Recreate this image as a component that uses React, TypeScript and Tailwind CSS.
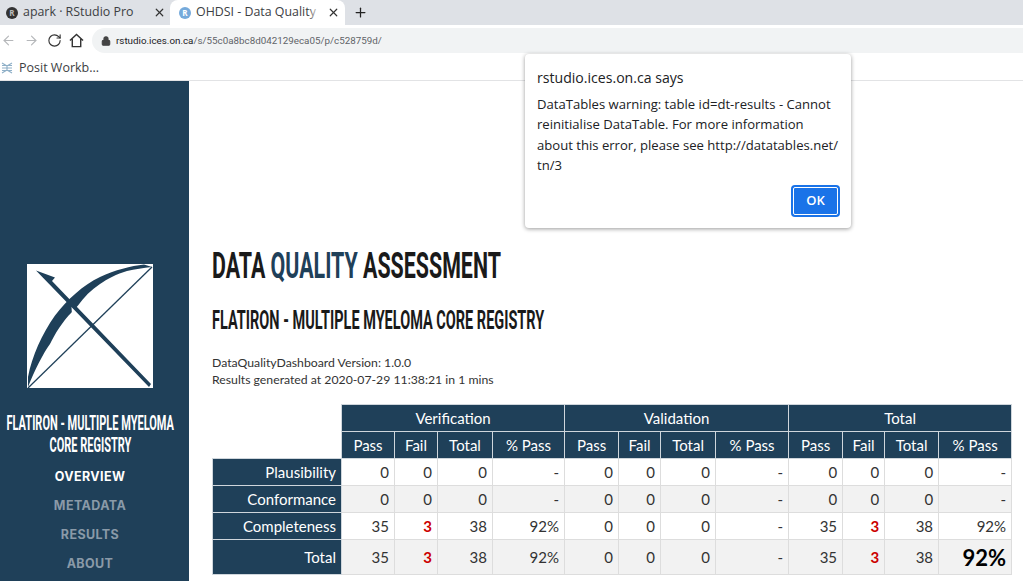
import { ArrowLeft, ArrowRight, RotateCw, Lock, X, Plus } from "lucide-react";

const cols = [53, 43, 55, 72, 54, 42, 55, 73, 54, 42, 54, 73];

const rows = [
  { name: "Plausibility", vals: ["0", "0", "0", "-"], total: ["0", "0", "0", "-"], h: "h-[27px]" },
  { name: "Conformance", vals: ["0", "0", "0", "-"], total: ["0", "0", "0", "-"], h: "h-[27px]" },
  { name: "Completeness", vals: ["35", "3", "38", "92%"], total: ["35", "3", "38", "92%"], h: "h-[27px]" },
  { name: "Total", vals: ["35", "3", "38", "92%"], total: ["35", "3", "38", "92%"], h: "h-[35px]", last: true },
];

function Favicon({ dark }: { dark?: boolean }) {
  return (
    <span
      className={`flex h-3 w-3 shrink-0 items-center justify-center rounded-full text-[8px] font-bold ${
        dark ? "bg-[#333333] text-[#bbbbbb]" : "bg-[#75aadb] text-white"
      }`}
    >
      R
    </span>
  );
}

function Logo() {
  return (
    <svg viewBox="0 0 126 124" className="h-[124px] w-[126px]">
      <rect width="126" height="124" fill="#ffffff" />
      <path
        d="M1 123 L1 113 C5 92 15 70 28 51.5 C40 36 56 21 73 13 C88 6 104 2 117 0.5 L125 3 C116 4 108 5 100 7 C90 10 80 15 73 20 C64 26 57 33 51 41.5 L45 48 C35 58 28 70 23 80 C17 88 7 107 1 123 Z"
        fill="#1f4059"
      />
      <path d="M44.5 43 L45 51 L53 51 L53 44 Z" fill="#ffffff" />
      <path d="M9 6.5 L28 13.5 L25 17 L124 120 L122 123 Z" fill="#1f4059" />
      <line x1="1" y1="124" x2="125" y2="3" stroke="#1f4059" strokeWidth="1.3" />
    </svg>
  );
}

export default function App() {
  return (
    <div className="relative h-[581px] w-[1023px] overflow-hidden bg-white font-['Lato',sans-serif] text-[#333333]">
      {/* tab strip */}
      <div className="flex h-[25px] items-end bg-[#dee1e6] font-['Open_Sans',sans-serif] text-[12.4px] text-[#3c4043]">
        <div className="flex h-[25px] w-[170px] items-center pl-[6px] pr-[4px]">
          <Favicon dark />
          <span className="ml-[5px] whitespace-nowrap">apark · RStudio Pro</span>
          <X className="ml-auto h-[13px] w-[13px] text-[#333333]" strokeWidth={2.2} />
        </div>
        <div className="relative flex h-[25px] w-[175px] items-center rounded-t-lg bg-white pl-[9px] pr-[5px]">
          <Favicon />
          <span className="ml-[5px] whitespace-nowrap">OHDSI - Data Quality</span>
          <div className="absolute left-[138px] top-0 h-[25px] w-[12px] bg-gradient-to-r from-transparent to-white" />
          <X className="ml-auto h-[13px] w-[13px] text-[#333333]" strokeWidth={2.2} />
        </div>
        <Plus className="mb-[5px] ml-[8px] h-[15px] w-[15px] text-[#222222]" strokeWidth={2} />
      </div>

      {/* address bar */}
      <div className="flex h-[28px] items-end bg-white">
        <div className="mb-[5px] flex items-center gap-[7px] pl-[1px]">
          <ArrowLeft className="h-[15px] w-[15px] text-[#b5b7ba]" strokeWidth={1.8} />
          <ArrowRight className="ml-[1px] h-[15px] w-[15px] text-[#b5b7ba]" strokeWidth={1.8} />
          <RotateCw className="ml-[1px] h-[15px] w-[15px] text-[#333333]" strokeWidth={1.8} />
          <svg viewBox="0 0 16 16" className="h-[15px] w-[15px]" fill="none" stroke="#333333" strokeWidth="1.5">
            <path d="M1 8 L8 1.5 L15 8 M3.5 6.5 V14.5 H12.5 V6.5" />
          </svg>
        </div>
        <div className="ml-[8px] flex h-[25px] flex-1 items-center rounded-l-full bg-[#f1f3f4] pl-[9px] pt-[1px] font-['Roboto',sans-serif] text-[9.8px] text-[#5f6368]">
          <Lock className="h-[10px] w-[10px] fill-[#444444] text-[#444444]" strokeWidth={2.5} />
          <span className="ml-[5px] whitespace-nowrap">
            <span className="text-[#202124]">rstudio.ices.on.ca</span>/s/55c0a8bc8d042129eca05/p/c528759d/
          </span>
        </div>
      </div>

      {/* bookmarks */}
      <div className="flex h-[28px] items-center border-b border-[#e2e3e5] bg-white pl-[1px] pt-[3px] font-['Open_Sans',sans-serif] text-[12.5px] text-[#3c4043]">
        <svg viewBox="0 0 12 12" className="h-3 w-3" fill="none" stroke="#8fb0c8" strokeWidth="1.2">
          <path d="M1 1 L6 4 L11 1 M1 11 L6 8 L11 11 M1 6 H11 M1 3.5 H11 M1 8.5 H11 M6 4 V8" />
        </svg>
        <span className="ml-[6px]">Posit Workb...</span>
      </div>

      <div className="flex h-[500px]">
        {/* sidebar */}
        <aside className="flex w-[189px] shrink-0 flex-col items-center bg-[#1f4059] pr-[9px] pt-[183px]">
          <Logo />
          <div className="mt-[24px] flex h-[44px] w-full flex-col items-center justify-center font-['Roboto',sans-serif] text-[20px] font-bold leading-[22px] text-white">
            <span className="scale-x-[0.55] whitespace-nowrap">FLATIRON - MULTIPLE MYELOMA</span>
            <span className="scale-x-[0.55] whitespace-nowrap">CORE REGISTRY</span>
          </div>
          <nav className="mt-[6px] flex flex-col items-center font-['Inter',sans-serif] text-[12.5px] font-bold leading-[29px] tracking-[0.4px]">
            <span className="text-white">OVERVIEW</span>
            <span className="text-[#8a9aa8]">METADATA</span>
            <span className="text-[#8a9aa8]">RESULTS</span>
            <span className="text-[#8a9aa8]">ABOUT</span>
          </nav>
        </aside>

        {/* main */}
        <main className="flex-1 pl-[23px] pt-[164px]">
          <h1 className="h-[42px] origin-left scale-x-[0.578] whitespace-nowrap font-['Roboto',sans-serif] text-[37px] font-bold leading-[42px] text-[#1a1a1a]">
            DATA <span className="text-[#1f4059]">QUALITY</span> ASSESSMENT
          </h1>
          <h2 className="mt-[20px] h-[28px] origin-left scale-x-[0.58] whitespace-nowrap font-['Roboto',sans-serif] text-[25px] font-bold leading-[28px] text-[#1a1a1a]">
            FLATIRON - MULTIPLE MYELOMA CORE REGISTRY
          </h2>
          <p className="mt-[19px] text-[12.25px] leading-[17px]">DataQualityDashboard Version: 1.0.0</p>
          <p className="text-[12.25px] leading-[17px]">Results generated at 2020-07-29 11:38:21 in 1 mins</p>

          <table className="mt-[16px] w-[799px] table-fixed border-collapse text-[15px]">
            <colgroup>
              <col className="w-[129px]" />
              {cols.map((w, i) => (
                <col key={i} style={{ width: w }} />
              ))}
            </colgroup>
            <thead>
              <tr className="h-[27px]">
                <th />
                {["Verification", "Validation", "Total"].map((t) => (
                  <th key={t} colSpan={4} className="border border-[#cfd6dc] bg-[#1f4059] font-normal text-white">
                    {t}
                  </th>
                ))}
              </tr>
              <tr className="h-[27px]">
                <th />
                {[0, 1, 2].flatMap((g) =>
                  ["Pass", "Fail", "Total", "% Pass"].map((t) => (
                    <th key={g + t} className="border border-[#cfd6dc] bg-[#1f4059] font-normal text-white">
                      {t}
                    </th>
                  ))
                )}
              </tr>
            </thead>
            <tbody>
              {rows.map((row, r) => {
                const cells = [...row.vals, "0", "0", "0", "-", ...row.total];
                return (
                  <tr key={row.name} className={`${row.h} ${r % 2 === 1 ? "bg-[#f2f2f2]" : "bg-white"}`}>
                    <th className="border border-[#cfd6dc] bg-[#1f4059] pr-[5px] text-right font-normal text-white">
                      {row.name}
                    </th>
                    {cells.map((c, i) => (
                      <td
                        key={i}
                        className={`border border-[#dddddd] pr-[5px] text-right ${
                          c === "3" ? "font-bold text-[#cc0000]" : ""
                        } ${row.last && i === 11 ? "text-[22px] font-bold text-black" : ""}`}
                      >
                        {c}
                      </td>
                    ))}
                  </tr>
                );
              })}
            </tbody>
          </table>
        </main>
      </div>

      {/* alert dialog */}
      <div className="absolute left-[525px] top-[54px] h-[174px] w-[326px] rounded-[4px] bg-white px-[12px] pt-[14px] font-['Open_Sans',sans-serif] text-[#202124] shadow-[0_1px_4px_rgba(0,0,0,0.4)]">
        <div className="text-[14.1px] leading-[20px]">rstudio.ices.on.ca says</div>
        <div className="mt-[6px] w-[305px] text-[13.1px] leading-[20.4px]">
          DataTables warning: table id=dt-results - Cannot reinitialise DataTable. For more information about this error, please see http://datatables.net/ tn/3
        </div>
        <button className="absolute bottom-[12px] right-[12px] h-[30px] w-[47px] rounded-[3px] bg-[#1a73e8] text-[13px] font-semibold text-white outline outline-[1px] outline-offset-[-2px] outline-white ring-1 ring-[#1a73e8]">
          OK
        </button>
      </div>
    </div>
  );
}
